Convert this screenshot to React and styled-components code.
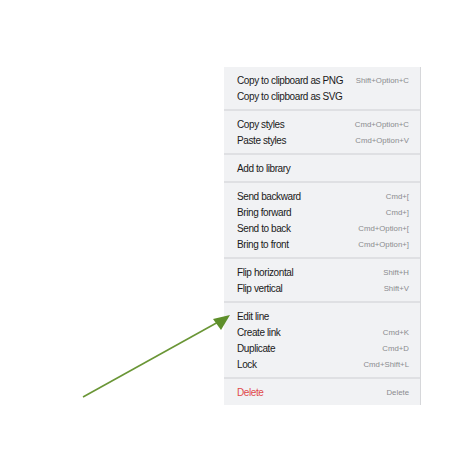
import React from 'react';
import styled, { createGlobalStyle } from 'styled-components';

const GlobalStyle = createGlobalStyle`
  html, body {
    margin: 0;
    padding: 0;
    background: #ffffff;
  }
  body {
    font-family: "Liberation Sans", Arial, sans-serif;
  }
`;

const Canvas = styled.div`
  position: relative;
  width: 474px;
  height: 474px;
  padding: 67px 0 0 224px;
  box-sizing: border-box;
  overflow: hidden;
`;

const Menu = styled.div`
  width: 196px;
  background: #f1f2f4;
  border-right: 1px solid #d6d7da;
  display: flex;
  flex-direction: column;
`;

const Group = styled.div`
  padding: 5px 0;
  border-bottom: ${(p) => (p.last ? 'none' : '2px solid #dfe0e3')};
`;

const Item = styled.div`
  height: 16px;
  display: flex;
  align-items: center;
  justify-content: space-between;
  padding: 0 11px 0 13px;
`;

const Label = styled.span`
  font-size: 10px;
  letter-spacing: -0.4px;
  color: ${(p) => (p.danger ? '#e0494b' : '#1a1a1a')};
`;

const Shortcut = styled.span`
  font-size: 7.8px;
  color: #8a8b8e;
`;

const Arrow = styled.svg`
  position: absolute;
  left: 0;
  top: 0;
  pointer-events: none;
`;

const groups = [
  [
    ['Copy to clipboard as PNG', 'Shift+Option+C'],
    ['Copy to clipboard as SVG', ''],
  ],
  [
    ['Copy styles', 'Cmd+Option+C'],
    ['Paste styles', 'Cmd+Option+V'],
  ],
  [['Add to library', '']],
  [
    ['Send backward', 'Cmd+['],
    ['Bring forward', 'Cmd+]'],
    ['Send to back', 'Cmd+Option+['],
    ['Bring to front', 'Cmd+Option+]'],
  ],
  [
    ['Flip horizontal', 'Shift+H'],
    ['Flip vertical', 'Shift+V'],
  ],
  [
    ['Edit line', ''],
    ['Create link', 'Cmd+K'],
    ['Duplicate', 'Cmd+D'],
    ['Lock', 'Cmd+Shift+L'],
  ],
  [['Delete', 'Delete', true]],
];

export default function App() {
  return (
    <Canvas>
      <GlobalStyle />
      <Menu>
        {groups.map((g, i) => (
          <Group key={i} last={i === groups.length - 1}>
            {g.map(([label, shortcut, danger]) => (
              <Item key={label}>
                <Label danger={danger}>{label}</Label>
                {shortcut && <Shortcut>{shortcut}</Shortcut>}
              </Item>
            ))}
          </Group>
        ))}
      </Menu>
      <Arrow width="474" height="474" viewBox="0 0 474 474">
        <line x1="83" y1="397" x2="220" y2="321" stroke="#6a9636" strokeWidth="1.6" />
        <polygon points="213,319 230,315 221,330" fill="#5e8f2a" />
      </Arrow>
    </Canvas>
  );
}
